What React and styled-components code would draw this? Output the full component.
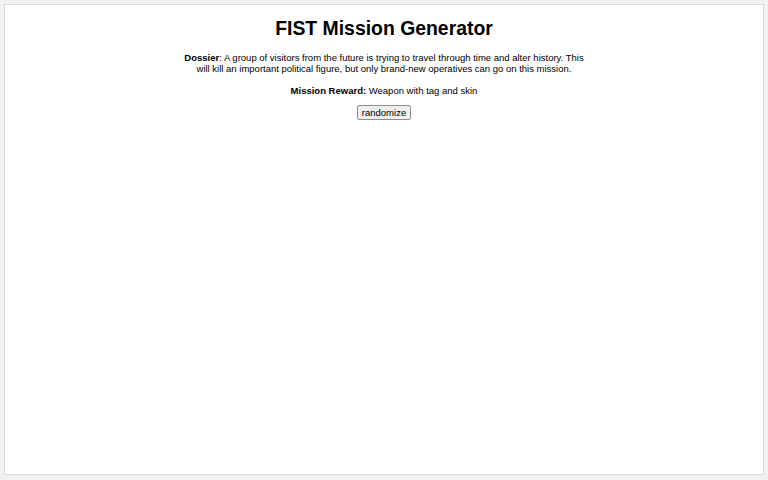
import React, { useState } from 'react';
import styled, { createGlobalStyle } from 'styled-components';

const GlobalStyle = createGlobalStyle`
    body {
        margin: 0;
        background-color: #f2f2f2;
        font-family: "Liberation Sans", Arial, sans-serif;
    }
`;

const Page = styled.div`
    box-sizing: border-box;
    margin: 4px 4px 0 4px;
    height: 471px;
    background-color: #fff;
    border: 1px solid #d9d9d9;
    text-align: center;
    padding-top: 12px;
`;

const Title = styled.h1`
    margin: 0 0 12px 0;
    font-size: 19.4px;
    line-height: 23px;
    font-weight: bold;
    color: #000;
`;

const Text = styled.p`
    max-width: 400px;
    margin: 0 auto ${props => props.$gap || 11}px auto;
    font-size: 9.5px;
    line-height: 11px;
    color: #000;
`;

const Button = styled.button`
    font-family: "Liberation Sans", Arial, sans-serif;
    font-size: 9.5px;
    line-height: 11px;
    padding: 1px 4px;
    background-color: #efefef;
    border: 1px solid #8f8f8f;
    border-radius: 2px;
    color: #000;
`;

const missions = [
    {
        dossier: "A group of visitors from the future is trying to travel through time and alter history. This will kill an important political figure, but only brand-new operatives can go on this mission.",
        reward: "Weapon with tag and skin",
    },
];

const App = () => {
    const [mission, setMission] = useState(missions[0]);
    return (
        <>
            <GlobalStyle />
            <Page>
                <Title>FIST Mission Generator</Title>
                <Text><b>Dossier</b>: {mission.dossier}</Text>
                <Text $gap={6}><b>Mission Reward:</b> {mission.reward}</Text>
                <Button onClick={() => setMission(missions[Math.floor(Math.random() * missions.length)])}>randomize</Button>
            </Page>
        </>
    );
};

export default App;
